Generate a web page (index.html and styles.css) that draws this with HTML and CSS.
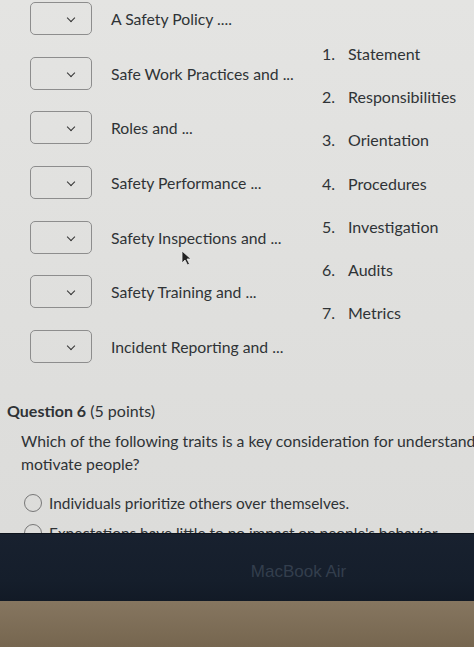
FILE: index.html
```html
<!DOCTYPE html>
<html lang="en">
<head>
<meta charset="utf-8">
<link rel="stylesheet" href="styles.css">
</head>
<body>
<div class="screen">
  <div class="match">
    <div class="prompts">
      <div class="row"><div class="select"><span class="chev"></span></div><span class="label">A Safety Policy ....</span></div>
      <div class="row"><div class="select"><span class="chev"></span></div><span class="label">Safe Work Practices and ...</span></div>
      <div class="row"><div class="select"><span class="chev"></span></div><span class="label">Roles and ...</span></div>
      <div class="row"><div class="select"><span class="chev"></span></div><span class="label">Safety Performance ...</span></div>
      <div class="row"><div class="select"><span class="chev"></span></div><span class="label">Safety Inspections and ...</span></div>
      <div class="row"><div class="select"><span class="chev"></span></div><span class="label">Safety Training and ...</span></div>
      <div class="row"><div class="select"><span class="chev"></span></div><span class="label">Incident Reporting and ...</span></div>
    </div>
    <ol class="answers">
      <li><span class="num">1.</span>Statement</li>
      <li><span class="num">2.</span>Responsibilities</li>
      <li><span class="num">3.</span>Orientation</li>
      <li><span class="num">4.</span>Procedures</li>
      <li><span class="num">5.</span>Investigation</li>
      <li><span class="num">6.</span>Audits</li>
      <li><span class="num">7.</span>Metrics</li>
    </ol>
  </div>
  <div class="question">
    <h2 class="qtitle"><b>Question 6</b> (5 points)</h2>
    <p class="qtext">Which of the following traits is a key consideration for understanding how to<br>motivate people?</p>
    <div class="option"><span class="radio"></span>Individuals prioritize others over themselves.</div>
    <div class="option"><span class="radio"></span>Expectations have little to no impact on people's behavior.</div>
  </div>
  <svg class="cursor" width="12" height="16" viewBox="0 0 12 16"><path d="M1 1 L1 13 L4 10 L6.5 15 L8.5 14 L6 9 L10 9 Z" fill="#222" stroke="#eee" stroke-width="0.8"/></svg>
</div>
<div class="bezel"><span class="brand">MacBook Air</span></div>
<div class="desk"></div>
</body>
</html>
```

FILE: styles.css
```css
html, body {
  margin: 0;
  padding: 0;
}
body {
  width: 474px;
  height: 647px;
  overflow: hidden;
  font-family: Lato, "Noto Sans", sans-serif;
  color: #2f3336;
  background: #e1e1df;
}
.screen {
  position: relative;
  height: 533px;
  overflow: hidden;
  background: linear-gradient(180deg, #e4e4e2 0%, #dfdfdd 60%, #dcdcda 100%);
}
.match {
  display: grid;
  grid-template-columns: 300px 1fr;
}
.prompts {
  display: flex;
  flex-direction: column;
  gap: 21.7px;
  padding: 2px 0 0 30px;
}
.row {
  display: flex;
  align-items: center;
  height: 33px;
}
.select {
  position: relative;
  box-sizing: border-box;
  width: 62px;
  height: 33px;
  border: 1px solid #8d8d8d;
  border-radius: 5px;
  flex: none;
}
.chev {
  position: absolute;
  right: 17px;
  top: 12px;
  width: 5px;
  height: 5px;
  border-right: 1.6px solid #333;
  border-bottom: 1.6px solid #333;
  transform: rotate(45deg);
}
.label {
  margin-left: 19px;
  font-size: 15.75px;
}
.answers {
  list-style: none;
  margin: 0;
  padding: 32px 0 0 22px;
}
.answers li {
  height: 43.2px;
  line-height: 43.2px;
  font-size: 16px;
}
.num {
  display: inline-block;
  width: 26px;
}
.question {
  padding: 37px 0 0 7px;
}
.qtitle {
  margin: 0;
  font-size: 16px;
  font-weight: normal;
  line-height: 22px;
}
.qtitle b {
  font-weight: 700;
}
.qtext {
  margin: 7px 0 0 14px;
  font-size: 15.75px;
  line-height: 23px;
  white-space: nowrap;
}
.option {
  display: flex;
  align-items: center;
  margin: 17px 0 0 17px;
  font-size: 15.4px;
  height: 22px;
  white-space: nowrap;
}
.option + .option {
  margin-top: 8px;
}
.radio {
  box-sizing: border-box;
  width: 18px;
  height: 18px;
  border: 1px solid #777;
  border-radius: 50%;
  margin-right: 7px;
  flex: none;
}
.cursor {
  position: absolute;
  left: 181px;
  top: 250px;
}
.bezel {
  height: 68px;
  background: linear-gradient(180deg, #18212f 0%, #151e2b 70%, #121a26 100%);
  border-top: 1px solid #0d131c;
  box-sizing: border-box;
  display: flex;
  justify-content: center;
  padding: 28px 0 0 123px;
}
.brand {
  font-family: "Liberation Sans", sans-serif;
  font-size: 17px;
  color: #333e4d;
}
.desk {
  height: 46px;
  background: linear-gradient(180deg, #867660 0%, #76664f 100%);
}
```
